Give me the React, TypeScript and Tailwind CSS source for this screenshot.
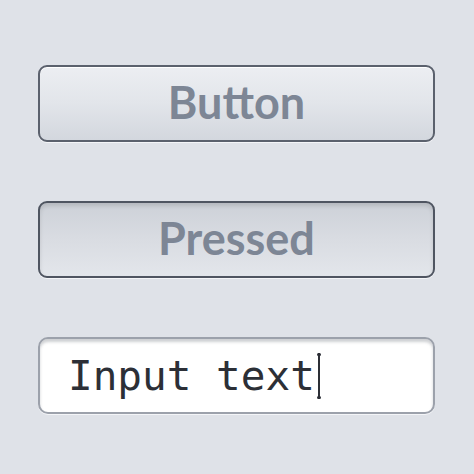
import { useState } from 'react';

export default function App() {
  const [value, setValue] = useState('Input text');

  return (
    <div className="w-[474px] h-[474px] bg-[#dfe2e8] flex flex-col gap-[59px] px-[38px] pt-[65px]">
      {/* Normal button */}
      <button className="h-[77px] w-[397px] rounded-[9px] border-2 border-[#5b616d] bg-gradient-to-b from-[#eceef2] via-[#e2e5ea] to-[#d3d7de] shadow-[inset_0_1px_0_#ffffff,0_1px_0_#f4f5f8] flex items-center justify-center">
        <span className="font-['Lato','Liberation_Sans',sans-serif] font-bold text-[45px] text-[#7d8695] leading-none -mt-[3px]">
          Button
        </span>
      </button>

      {/* Pressed button */}
      <button className="h-[77px] w-[397px] rounded-[9px] border-2 border-[#4f5561] bg-gradient-to-b from-[#cdd1d8] via-[#d9dce2] to-[#e3e6eb] shadow-[inset_0_3px_4px_rgba(0,0,0,0.12),0_1px_0_#f4f5f8] flex items-center justify-center">
        <span className="font-['Lato','Liberation_Sans',sans-serif] font-bold text-[45px] text-[#7d8695] leading-none -mt-[2px]">
          Pressed
        </span>
      </button>

      {/* Input field */}
      <div className="h-[77px] w-[397px] rounded-[10px] border-2 border-[#9ca1ab] bg-white shadow-[inset_0_3px_3px_rgba(60,66,80,0.25),0_1px_0_#f4f5f8] flex items-center pl-[28px]">
        <input
          value={value}
          onChange={(e) => setValue(e.target.value)}
          className="w-[250px] bg-transparent outline-none font-['DejaVu_Sans_Mono',monospace] text-[41px] text-[#2c2f36] leading-none"
        />
        <div className="relative h-[46px] w-[2px] bg-[#2c2f36]">
          <div className="absolute -left-[1px] top-0 h-[3px] w-[4px] rounded-sm bg-[#2c2f36]" />
          <div className="absolute -left-[1px] bottom-0 h-[3px] w-[4px] rounded-sm bg-[#2c2f36]" />
        </div>
      </div>
    </div>
  );
}
